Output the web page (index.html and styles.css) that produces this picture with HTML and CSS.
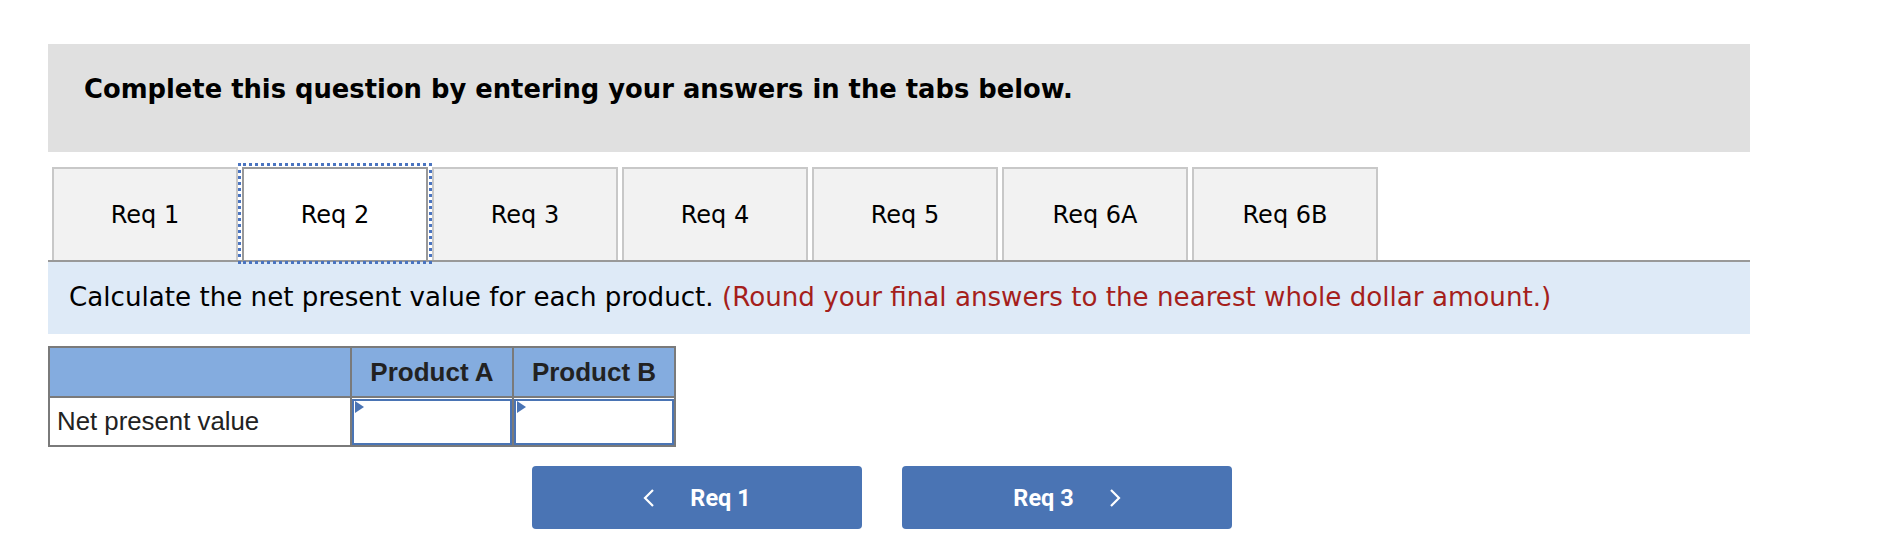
FILE: index.html
```html
<!DOCTYPE html>
<html>

<head>
	<meta charset="UTF-8">
	<title>Req 2</title>
	<link rel="stylesheet" href="styles.css">
</head>

<body>
	<section class="question">
		<div class="instructions">
			<h1 class="lead">Complete this question by entering your answers in the tabs below.</h1>
		</div>

		<ul class="tabs">
			<li class="tab">Req 1</li>
			<li class="tab active">Req 2</li>
			<li class="tab">Req 3</li>
			<li class="tab">Req 4</li>
			<li class="tab">Req 5</li>
			<li class="tab">Req 6A</li>
			<li class="tab">Req 6B</li>
		</ul>

		<p class="prompt">Calculate the net present value for each product. <span class="hint">(Round your final answers to the nearest whole dollar amount.)</span></p>

		<table class="answers">
			<thead>
				<tr>
					<th class="label"></th>
					<th>Product A</th>
					<th>Product B</th>
				</tr>
			</thead>
			<tbody>
				<tr>
					<td class="label">Net present value</td>
					<td class="cell"><input type="text" class="entry" /></td>
					<td class="cell"><input type="text" class="entry" /></td>
				</tr>
			</tbody>
		</table>

		<div class="nav">
			<button class="navBtn">
				<svg width="12" height="18" viewBox="0 0 12 18"><polyline points="10,1 2,9 10,17" fill="none" stroke="#fff" stroke-width="2.2" /></svg>
				<span>Req 1</span>
			</button>
			<button class="navBtn">
				<span>Req 3</span>
				<svg width="12" height="18" viewBox="0 0 12 18"><polyline points="2,1 10,9 2,17" fill="none" stroke="#fff" stroke-width="2.2" /></svg>
			</button>
		</div>
	</section>
</body>

</html>
```

FILE: styles.css
```css
body,
h1,
p {
	margin: 0;
}

ul {
	margin: 0;
	padding: 0;
	list-style: none;
}

input {
	outline: none;
}

body {
	background: #fff;
	font-family: "DejaVu Sans", Verdana, sans-serif;
	color: #000;
}

.question {
	width: 1702px;
	margin: 44px 0 0 48px;
}

.instructions {
	box-sizing: border-box;
	height: 108px;
	padding: 30px 36px 0;
	background-color: #e0e0e0;
}

.lead {
	font-size: 25.8px;
	font-weight: bold;
	line-height: 30px;
}

.tabs {
	display: flex;
	gap: 4px;
	margin-top: 15px;
	padding-left: 4px;
	border-bottom: 2px solid #999;
}

.tab {
	box-sizing: border-box;
	width: 186px;
	height: 93px;
	display: flex;
	align-items: center;
	justify-content: center;
	background-color: #f2f2f2;
	border: 2px solid #c8c8c8;
	border-bottom: none;
	font-size: 24px;
}

.tab.active {
	background-color: #fff;
	border-color: #999;
	outline: 3px dotted #4a74c0;
	outline-offset: 1px;
}

.prompt {
	box-sizing: border-box;
	height: 72px;
	padding: 20px 21px 0;
	background-color: #deeaf7;
	font-size: 26.15px;
	line-height: 30px;
}

.hint {
	color: #a51f1c;
}

.answers {
	margin-top: 12px;
	border-collapse: collapse;
	border: 2px solid #7a7a7a;
	font-family: "Liberation Sans", Arial, sans-serif;
	color: #222;
}

.answers th,
.answers td {
	border: 2px solid #7a7a7a;
	padding: 0;
}

.answers th {
	height: 48px;
	width: 160px;
	background-color: #84acdf;
	font-size: 26px;
	text-align: center;
}

.answers th.label {
	width: 300px;
}

.answers td.label {
	height: 47px;
	padding-left: 7px;
	font-size: 25.8px;
	text-align: left;
}

.cell {
	position: relative;
	padding: 1px;
}

.cell::before {
	content: "";
	position: absolute;
	left: 3px;
	top: 3px;
	border-left: 9px solid #4a74b4;
	border-top: 6px solid transparent;
	border-bottom: 6px solid transparent;
}

.entry {
	box-sizing: border-box;
	display: block;
	width: 100%;
	height: 46px;
	margin: 0;
	border: 2px solid #4a74b4;
	background: #fff;
}

.nav {
	display: flex;
	gap: 40px;
	margin: 19px 0 0 484px;
}

.navBtn {
	box-sizing: border-box;
	width: 330px;
	height: 63px;
	display: flex;
	align-items: center;
	justify-content: center;
	gap: 35px;
	border: none;
	border-radius: 4px;
	background-color: #4a74b4;
	color: #fff;
	font-family: Roboto, "Liberation Sans", sans-serif;
	font-size: 23.5px;
	font-weight: bold;
}
```
